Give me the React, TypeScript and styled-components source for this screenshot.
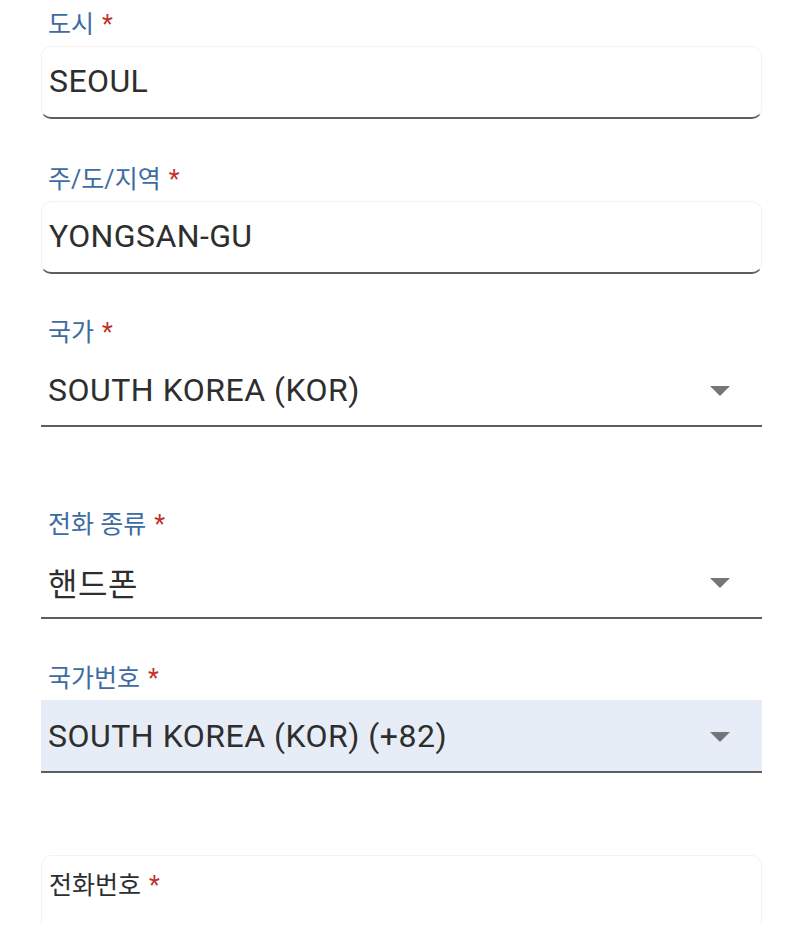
import styled, { createGlobalStyle } from "styled-components";

const GlobalStyle = createGlobalStyle`
  body {
    margin: 0;
    background: #ffffff;
    font-family: Roboto, "Noto Sans CJK KR", sans-serif;
  }
`;

type FieldInfo = {
  label: string;
  value: string;
  kind: "text" | "select";
  highlight?: boolean;
  gap: number;
};

const fields: FieldInfo[] = [
  { label: "도시", value: "SEOUL", kind: "text", gap: 48 },
  { label: "주/도/지역", value: "YONGSAN-GU", kind: "text", gap: 46 },
  { label: "국가", value: "SOUTH KOREA (KOR)", kind: "select", gap: 85 },
  { label: "전화 종류", value: "핸드폰", kind: "select", gap: 47 },
  {
    label: "국가번호",
    value: "SOUTH KOREA (KOR) (+82)",
    kind: "select",
    highlight: true,
    gap: 82,
  },
];

function Arrow() {
  return (
    <svg width="20" height="10" viewBox="0 0 20 10">
      <path d="M0 0 L20 0 L10 10 Z" fill="#767676" />
    </svg>
  );
}

function Required() {
  return <Star>*</Star>;
}

export default function App() {
  return (
    <>
      <GlobalStyle />
      <Form>
        {fields.map((field) => (
          <Field key={field.label} $gap={field.gap}>
            <Label>
              {field.label}
              <Required />
            </Label>
            {field.kind === "text" ? (
              <TextBox>{field.value}</TextBox>
            ) : (
              <SelectBox $highlight={field.highlight}>
                <span>{field.value}</span>
                <ArrowWrap>
                  <Arrow />
                </ArrowWrap>
              </SelectBox>
            )}
          </Field>
        ))}
        {/* 전화번호 칸은 라벨이 안에 들어가 있음 */}
        <PhoneBox>
          <InnerLabel>
            전화번호
            <Required />
          </InnerLabel>
        </PhoneBox>
      </Form>
    </>
  );
}

const Form = styled.div`
  width: 721px;
  padding: 12px 0 0 41px;
  height: 913px;
  overflow: hidden;
`;

const Field = styled.div<{ $gap: number }>`
  display: flex;
  flex-direction: column;
  margin-bottom: ${(p) => p.$gap}px;
`;

const Label = styled.div`
  height: 26px;
  line-height: 26px;
  margin-bottom: 8px;
  padding-left: 7px;
  font-size: 25px;
  color: #3d6ca3;
`;

const Star = styled.span`
  color: #c0312b;
  margin-left: 8px;
`;

const TextBox = styled.div`
  box-sizing: border-box;
  height: 73px;
  display: flex;
  align-items: center;
  padding: 0 7px 2px;
  border: 1px solid #f3f3f3;
  border-bottom: 2px solid #5e5e5e;
  border-radius: 10px;
  font-size: 32px;
  letter-spacing: 0.4px;
  color: #2e2e2e;
`;

const SelectBox = styled.div<{ $highlight?: boolean }>`
  box-sizing: border-box;
  height: 73px;
  display: flex;
  align-items: center;
  justify-content: space-between;
  padding: 0 32px 0 7px;
  border-bottom: 2px solid #5e5e5e;
  background: ${(p) => (p.$highlight ? "#e7edf6" : "transparent")};
  font-size: 32px;
  letter-spacing: 0.5px;
  color: #2e2e2e;
`;

const ArrowWrap = styled.span`
  display: flex;
  margin-top: 2px;
`;

const PhoneBox = styled.div`
  box-sizing: border-box;
  height: 90px;
  padding: 17px 7px 0;
  border: 1px solid #f3f3f3;
  border-radius: 10px;
`;

const InnerLabel = styled.div`
  line-height: 26px;
  font-size: 25px;
  color: #2e2e2e;
`;
